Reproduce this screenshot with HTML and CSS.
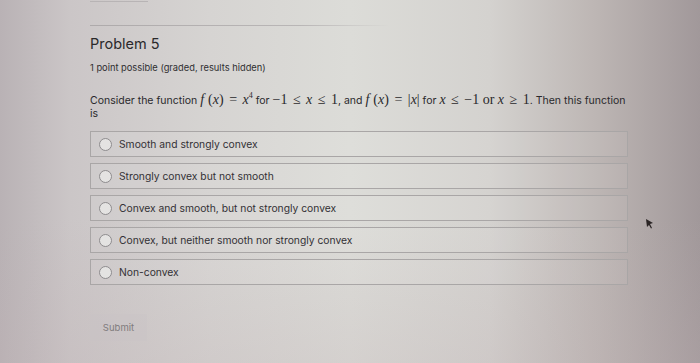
FILE: index.html
```html
<!DOCTYPE html>
<html>
<head>
<meta charset="utf-8">
<link rel="stylesheet" href="styles.css">
</head>
<body>
<div class="screen">
  <div class="shortline"></div>
  <div class="topline"></div>
  <div class="problem">
    <h2 class="title">Problem 5</h2>
    <div class="meta">1 point possible (graded, results hidden)</div>
    <p class="question">Consider the function <span class="m"><i>f</i><span class="sp"></span>(<i>x</i>)<span class="rel">=</span><i>x</i><sup>4</sup></span> for <span class="m">−1<span class="rel">≤</span><i>x</i><span class="rel">≤</span>1</span>, and <span class="m"><i>f</i><span class="sp"></span>(<i>x</i>)<span class="rel">=</span>|<i>x</i>|</span> for <span class="m"><i>x</i><span class="rel">≤</span>−1 or <i>x</i><span class="rel">≥</span>1</span>. Then this function<br>is</p>
    <div class="options">
      <label class="opt"><span class="radio"></span>Smooth and strongly convex</label>
      <label class="opt"><span class="radio"></span>Strongly convex but not smooth</label>
      <label class="opt"><span class="radio"></span>Convex and smooth, but not strongly convex</label>
      <label class="opt"><span class="radio"></span>Convex, but neither smooth nor strongly convex</label>
      <label class="opt"><span class="radio"></span>Non-convex</label>
    </div>
    <div class="actions"><span class="submit">Submit</span></div>
  </div>
  <svg class="cursor" width="10" height="12" viewBox="0 0 10 12"><path d="M1 1 L8 5 L5 6 L7 10 L6 10.5 L4 7 L2 9 Z" fill="#2a2424"/></svg>
</div>
</body>
</html>
```
FILE: styles.css
```css
html, body { margin: 0; padding: 0; }
body {
  width: 700px; height: 363px; overflow: hidden;
  font-family: "Inter", "Liberation Sans", sans-serif;
  color: #2b2a2c;
}
.screen {
  position: relative;
  width: 700px; height: 363px;
  box-sizing: border-box;
  padding: 1px 0 0 90px;
  background:
    linear-gradient(180deg, rgba(255,255,255,0) 60%, rgba(190,175,178,0.25) 100%),
    linear-gradient(90deg, #b9b2b5 0%, #cbc6c7 10%, #d6d4d2 30%, #dcdcd8 50%, #d4d2cf 70%, #bdb6b4 85%, #a1989a 100%);
}
.shortline {
  width: 58px; height: 1px; background: #b8b4b5;
}
.topline {
  width: 300px; height: 1px;
  background: linear-gradient(90deg, #aeaaab, #b9b6b6 70%, rgba(185,182,182,0));
  margin-top: 23px; margin-bottom: 8px;
}
.problem { width: 538px; }
.title {
  margin: 0;
  font-size: 14.5px; font-weight: 400; color: #2a292b;
  line-height: 20px;
}
.meta {
  margin-top: 8px;
  font-size: 9.3px; color: #2f2e30; line-height: 12px;
}
.question {
  margin: 19px 0 0 0;
  font-size: 10.5px; line-height: 13px; color: #2a292c;
  width: 580px;
}
.m { font-family: "Liberation Serif", "DejaVu Serif", serif; font-size: 14px; line-height: 13px; }
.m sup { font-size: 8px; line-height: 0; }
.sp { display: inline-block; width: 4px; }
.rel { margin: 0 5.5px; }
.options {
  margin-top: 11px;
  display: flex; flex-direction: column; gap: 6px;
}
.opt {
  display: flex; align-items: center;
  height: 26px; box-sizing: border-box;
  border: 1px solid #a9a6a6;
  padding-left: 8px;
  font-size: 10.3px; color: #333135;
  background: rgba(255,255,255,0.06);
}
.radio {
  width: 13px; height: 13px; border-radius: 50%;
  border: 1px solid #8e8c8e; box-sizing: border-box;
  background: #e4e3e2;
  margin-right: 7px;
}
.actions { margin-top: 29px; }
.submit {
  display: inline-block;
  width: 57px; height: 27px; line-height: 27px;
  text-align: center;
  font-size: 9.5px; color: #7f7c7d;
  background: rgba(200,196,197,0.35);
}
.cursor {
  position: absolute; left: 645px; top: 218px;
}
```
